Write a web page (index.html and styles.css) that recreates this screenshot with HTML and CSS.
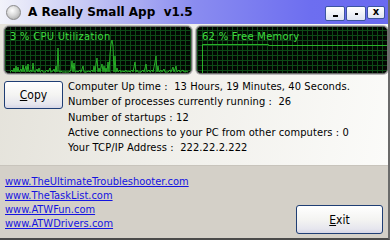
FILE: index.html
```html
<!DOCTYPE html>
<html lang="en">
<head>
    <meta charset="UTF-8">
    <title>A Really Small App v1.5</title>
    <link rel="stylesheet" href="styles.css">
</head>
<body>
    <div class="window">
        <div class="titlebar">
            <div class="app-icon"></div>
            <div class="title">A Really Small App&nbsp; v1.5</div>
            <div class="caption-buttons">
                <div class="cap-btn"><span class="min-bar"></span></div>
                <div class="cap-btn"><span class="drop-dot"></span></div>
                <div class="cap-btn close">x</div>
            </div>
        </div>

        <div class="content">
            <div class="graphs">
                <div class="graph cpu">
                    <div class="graph-label">3 % CPU Utilization</div>
                    <svg class="graph-plot" width="188" height="48" viewBox="0 0 188 48">
                        <polyline fill="none" stroke="#28b028" stroke-width="1"
                            points="6,46 8,44 9,46 10,42 11,46 12,40 13,46 14,41 15,46 17,43 18,46 19,39 20,46 22,40 23,46 24,38 25,46 27,44 28,46 29,37 30,46 32,45 33,43 34,46 35,42 36,46 38,44 39,46 41,46 43,44 44,46 46,42 47,46 49,45 50,43 51,46 52,40 53,46 54,22 55,46 57,45 58,46 60,46 63,46 65,46 67,44 68,35 69,46 70,37 71,46 73,45 74,46 76,44 77,46 79,40 80,46 82,46 85,45 86,46 88,44 89,46 90,40 91,46 92,38 93,32 94,46 95,42 96,46 98,38 99,46 100,40 101,46 102,42 103,46 104,36 105,46 106,28 107,18 108,14 109,20 110,46 111,30 112,46 113,42 114,46 116,44 117,46 119,45 120,46 122,44 123,46 125,45 126,46 128,44 129,46 131,36 132,46 133,44 134,46 137,46 139,44 140,46 142,38 143,46 145,44 146,46 148,44 149,46 151,36 152,30 153,46 154,40 155,46 157,44 158,46 160,43 161,46 164,46 166,44 167,46 169,41 170,46 172,40 173,46 175,44 176,46 179,44 180,46 182,45 184,46" />
                    </svg>
                </div>
                <div class="graph memory">
                    <div class="graph-label">62 % Free Memory</div>
                    <svg class="graph-plot" width="192" height="48" viewBox="0 0 192 48">
                        <polyline fill="none" stroke="#28b028" stroke-width="1"
                            points="6.5,47 6.5,18.5 72.5,18.5 72.5,19.5 191,19.5" />
                    </svg>
                </div>
            </div>

            <div class="info-row">
                <div class="xp-btn copy-btn"><u>C</u>opy</div>
                <div class="info-lines">
                    <div class="info-line">Computer Up time :&nbsp; 13 Hours, 19 Minutes, 40 Seconds.</div>
                    <div class="info-line">Number of processes currently running :&nbsp; 26</div>
                    <div class="info-line">Number of startups : 12</div>
                    <div class="info-line">Active connections to your PC from other computers : 0</div>
                    <div class="info-line">Your TCP/IP Address :&nbsp; 222.22.2.222</div>
                </div>
            </div>
        </div>

        <div class="footer">
            <div class="links">
                <a class="link" href="#">www.TheUltimateTroubleshooter.com</a>
                <a class="link" href="#">www.TheTaskList.com</a>
                <a class="link" href="#">www.ATWFun.com</a>
                <a class="link" href="#">www.ATWDrivers.com</a>
            </div>
            <div class="xp-btn exit-btn"><u>E</u>xit</div>
        </div>
    </div>
</body>
</html>
```

FILE: styles.css
```css
body {
    margin: 0;
    padding: 0;
    font-family: "DejaVu Sans Condensed", "DejaVu Sans", sans-serif;
    font-size: 11px;
    background-color: #d4d0c8;
}
.window {
    width: 390px;
    height: 240px;
    display: flex;
    flex-direction: column;
    overflow: hidden;
    box-sizing: border-box;
    border-bottom: 2px solid #4a4a4a;
    border-right: 2px solid #6a6a6a;
}
.titlebar {
    height: 24px;
    flex: none;
    display: flex;
    align-items: center;
    background: linear-gradient(to right, #f2f3fa 0%, #c6c8f4 22%, #8a8cf0 50%, #6d6ef0 80%, #6a6af0 100%);
}
.app-icon {
    width: 13px;
    height: 13px;
    margin: 1px 0 0 6px;
    border-radius: 50%;
    border: 1px solid #8a8a8a;
    background: radial-gradient(circle at 40% 35%, #ffffff 0%, #d8d8d8 45%, #9a9a9a 100%);
}
.title {
    margin-left: 7px;
    font-family: "DejaVu Sans", sans-serif;
    font-weight: bold;
    font-size: 12px;
    color: #000;
    flex: 1;
}
.caption-buttons {
    display: flex;
    gap: 1px;
    margin: 3px 3px 0 0;
}
.cap-btn {
    width: 18px;
    height: 13px;
    border: 1px solid #3c55a0;
    border-radius: 2px;
    background: linear-gradient(#ffffff, #dfe4f2);
    display: flex;
    align-items: center;
    justify-content: center;
    font-family: "DejaVu Sans", sans-serif;
    font-weight: bold;
    font-size: 10px;
    line-height: 1;
    color: #000;
}
.min-bar {
    width: 5px;
    height: 2px;
    margin-top: 5px;
    background-color: #000;
}
.drop-dot {
    width: 3px;
    height: 2px;
    margin-top: 1px;
    background-color: #000;
}
.close {
    padding-bottom: 2px;
    box-sizing: border-box;
}
.content {
    flex: none;
    height: 142px;
    padding-top: 2px;
    box-sizing: border-box;
    background: linear-gradient(100deg, #e4e2da 0%, #f0efea 45%, #fbfbf9 100%);
    border-bottom: 1px solid #c8c4bc;
}
.graphs {
    display: flex;
    gap: 4px;
    padding-left: 4px;
}
.graph {
    position: relative;
    height: 48px;
    box-sizing: border-box;
    border-radius: 5px;
    border: 1px solid #6c6c6c;
    box-shadow: 0 0 0 1px #b8b8b8;
    overflow: hidden;
    background-color: #020602;
    background-image:
        linear-gradient(to right, #0d4a16 1px, transparent 1px),
        linear-gradient(to bottom, #0d4a16 1px, transparent 1px);
    background-size: 5px 5px;
    background-position: 5px 3px;
}
.cpu {
    width: 188px;
}
.memory {
    width: 192px;
}
.graph-label {
    position: absolute;
    top: 3px;
    left: 5px;
    color: #3fdc3f;
    font-size: 11px;
    letter-spacing: 0.3px;
}
.graph-plot {
    position: absolute;
    left: -1px;
    top: -1px;
}
.info-row {
    display: flex;
    padding: 7px 0 0 4px;
}
.xp-btn {
    box-sizing: border-box;
    border: 1px solid #1f3e74;
    border-radius: 3px;
    background: linear-gradient(#ffffff 0%, #f4f4f2 50%, #e6e6ee 85%, #d6d6e6 100%);
    display: flex;
    align-items: center;
    justify-content: center;
    font-size: 12px;
    color: #000;
}
.copy-btn {
    width: 59px;
    height: 28px;
    flex: none;
}
.info-lines {
    margin: -2px 0 0 5px;
}
.info-line {
    height: 15.3px;
    line-height: 15px;
    color: #000;
    letter-spacing: 0.1px;
    white-space: nowrap;
}
.footer {
    flex: 1;
    display: flex;
    justify-content: space-between;
    align-items: flex-end;
    padding: 0 5px 4px 5px;
    background-color: #d4d0c8;
}
.links {
    display: flex;
    flex-direction: column;
    padding-bottom: 3px;
}
.link {
    color: #1414e0;
    text-decoration: underline;
    line-height: 14px;
    font-size: 11px;
}
.exit-btn {
    width: 87px;
    height: 29px;
}
```
